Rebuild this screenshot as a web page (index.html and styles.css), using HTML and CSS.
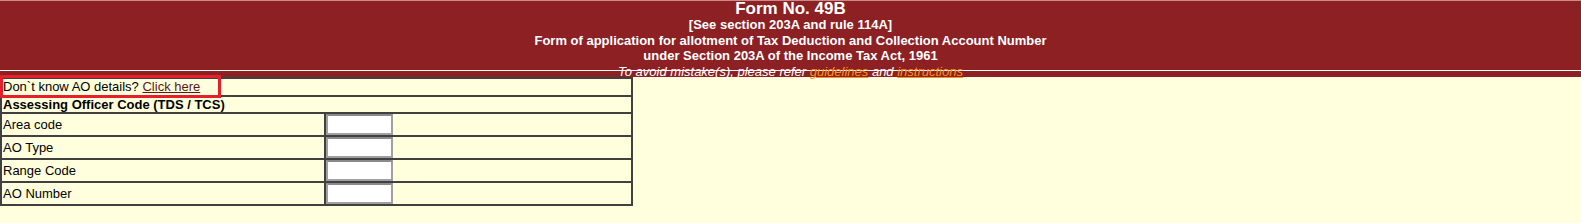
FILE: index.html
```html
<!DOCTYPE html>
<html lang="en">
<head>
  <meta charset="UTF-8" />
  <title>Form No. 49B</title>
  <link rel="stylesheet" href="styles.css">
</head>
<body>

<div class="head">
  <div class="head-title">Form No. 49B</div>
  <div class="head-line">[See section 203A and rule 114A]</div>
  <div class="head-line">Form of application for allotment of Tax Deduction and Collection Account Number</div>
  <div class="head-line">under Section 203A of the Income Tax Act, 1961</div>
  <div class="head-note">To avoid mistake(s), please refer <a href="#">guidelines</a> and <a href="#">instructions</a></div>
</div>
<div class="head-bar"></div>

<div class="ao-wrap">
  <table class="ao-table">
    <tr>
      <td colspan="2" class="ao-top">Don`t know AO details? <a href="#" class="ao-link">Click here</a></td>
    </tr>
    <tr>
      <td colspan="2" class="ao-heading">Assessing Officer Code (TDS / TCS)</td>
    </tr>
    <tr>
      <td class="ao-label">Area code</td>
      <td class="ao-field"><input type="text" /></td>
    </tr>
    <tr>
      <td class="ao-label">AO Type</td>
      <td class="ao-field"><input type="text" /></td>
    </tr>
    <tr>
      <td class="ao-label">Range Code</td>
      <td class="ao-field"><input type="text" /></td>
    </tr>
    <tr>
      <td class="ao-label">AO Number</td>
      <td class="ao-field"><input type="text" /></td>
    </tr>
  </table>
  <div class="mark"></div>
</div>

</body>
</html>
```

FILE: styles.css
```css
body {
  margin: 0;
  background: #ffffdd;
  font-family: 'Liberation Sans', Arial, sans-serif;
  font-size: 13px;
  color: #000;
}

.head {
  background: #8c2023;
  border-top: 1px solid #c98a8a;
  border-bottom: 1px solid #fff;
  height: 69px;
  color: #fff;
  text-align: center;
  font-weight: bold;
}

.head-title {
  font-size: 17px;
  line-height: 16px;
}

.head-line {
  line-height: 15.5px;
}

.head-note {
  font-weight: normal;
  font-style: italic;
  line-height: 15px;
}

.head-note a {
  color: #f7941d;
  text-decoration: underline;
}

.head-bar {
  height: 6px;
  background: #8c2023;
}

.ao-wrap {
  position: relative;
}

.ao-table {
  width: 633px;
  border-collapse: collapse;
  border: 2px solid #404040;
}

.ao-table td {
  border: 2px solid #404040;
  padding: 0 1px;
  height: 15px;
  line-height: 15px;
}

.ao-table .ao-top {
  height: 16px;
  line-height: 16px;
}

.ao-heading {
  font-weight: bold;
}

.ao-label {
  width: 320px;
}

.ao-table .ao-field {
  padding: 0;
  height: 21px;
}

.ao-field input {
  display: block;
  width: 67px;
  height: 21px;
  box-sizing: border-box;
  margin: 0;
  border: 2px solid #a0a0a0;
  border-top-color: #8a8a8a;
  background: #fff;
}

.ao-link {
  color: #5c1717;
}

/* highlight round the "don't know" row */
.mark {
  position: absolute;
  left: 0;
  top: -2px;
  width: 215px;
  height: 17px;
  border: 3px solid #e5202a;
}
```
